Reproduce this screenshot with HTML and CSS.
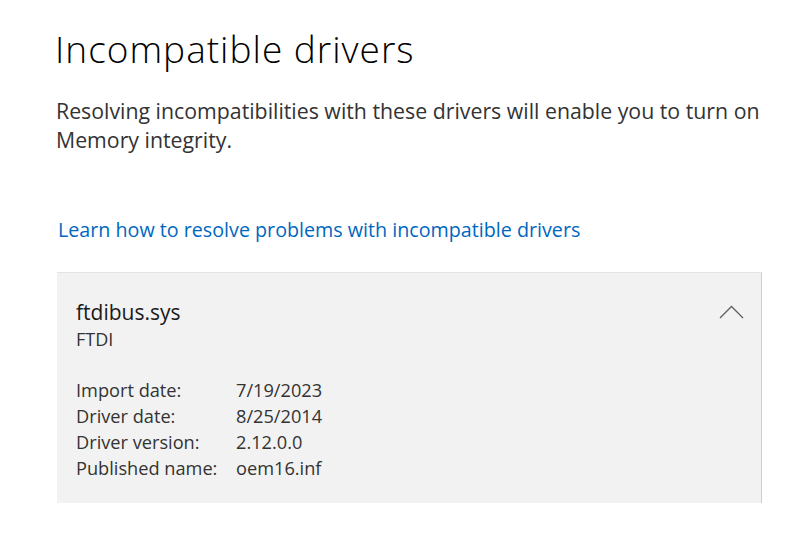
FILE: index.html
```html
<!DOCTYPE html>
<html lang="en">
<head>
<meta charset="utf-8">
<title>Incompatible drivers</title>
<link rel="stylesheet" href="styles.css">
</head>
<body>
<main class="page">
  <h1 class="title">Incompatible drivers</h1>
  <p class="intro">Resolving incompatibilities with these drivers will enable you to turn on Memory integrity.</p>
  <a class="learn" href="#">Learn how to resolve problems with incompatible drivers</a>
  <section class="card">
    <div class="card-body">
      <div class="driver-name">ftdibus.sys</div>
      <div class="driver-vendor">FTDI</div>
      <dl class="details">
        <dt>Import date:</dt><dd>7/19/2023</dd>
        <dt>Driver date:</dt><dd>8/25/2014</dd>
        <dt>Driver version:</dt><dd>2.12.0.0</dd>
        <dt>Published name:</dt><dd>oem16.inf</dd>
      </dl>
    </div>
    <button class="toggle" aria-label="Collapse">
      <svg width="25" height="14" viewBox="0 0 25 14"><path d="M1 13 L12.5 1.5 L24 13" fill="none" stroke="#5f5f5f" stroke-width="1.3"/></svg>
    </button>
  </section>
</main>
</body>
</html>
```
FILE: styles.css
```css
html, body {
  margin: 0;
  padding: 0;
  background: #ffffff;
}
body {
  font-family: "Open Sans", "Noto Sans", sans-serif;
  color: #1a1a1a;
}
.page {
  padding: 25px 0 0 55px;
  width: 707px;
}
.title {
  margin: 0;
  font-size: 37px;
  font-weight: 300;
  letter-spacing: 1px;
  line-height: 48px;
  color: #000;
}
.intro {
  margin: 23px 0 0 1px;
  font-size: 21.3px;
  line-height: 29px;
  color: #333;
}
.learn {
  display: block;
  margin: 62px 0 0 3px;
  font-size: 19.7px;
  line-height: 28px;
  color: #0067c0;
  text-decoration: none;
}
.card {
  margin: 28px 0 0 2px;
  width: 705px;
  box-sizing: border-box;
  background: #f2f2f2;
  border-top: 1px solid #e4e4e4;
  border-right: 1px solid #cdcdcd;
  display: flex;
  justify-content: space-between;
  align-items: flex-start;
}
.card-body {
  padding: 25px 0 22px 19px;
}
.driver-name {
  font-size: 21px;
  line-height: 28px;
  color: #1a1a1a;
}
.driver-vendor {
  font-size: 18px;
  line-height: 26px;
  color: #333;
}
.details {
  margin: 25px 0 0;
  display: grid;
  grid-template-columns: 160px auto;
  font-size: 18.2px;
  line-height: 26px;
  color: #333;
}
.details dt, .details dd {
  margin: 0;
}
.toggle {
  margin: 32px 17px 0 0;
  padding: 0;
  border: 0;
  background: transparent;
  width: 25px;
  height: 14px;
  display: flex;
}
```
